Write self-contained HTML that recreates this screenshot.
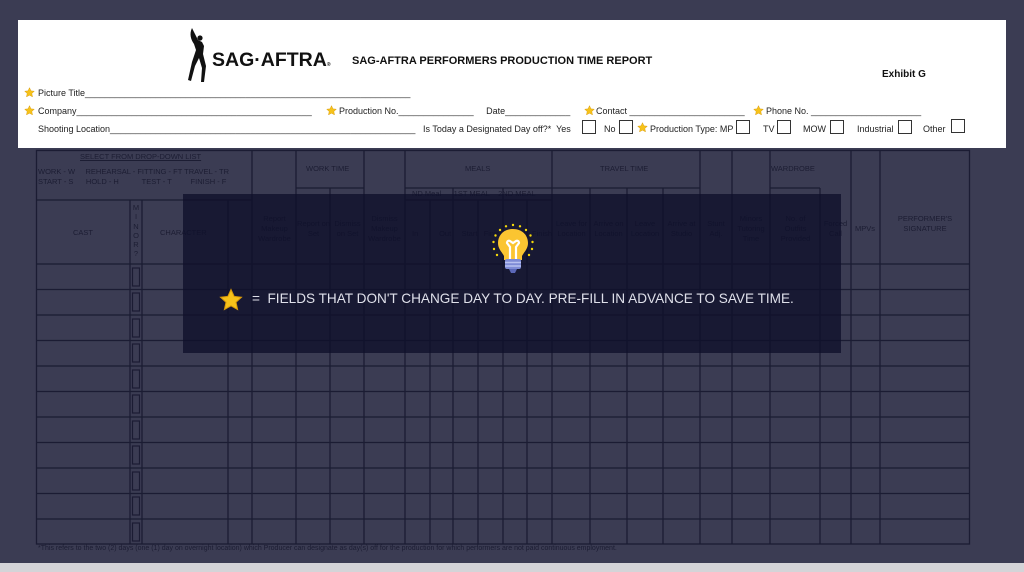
<!DOCTYPE html>
<html><head><meta charset="utf-8">
<style>
*{margin:0;padding:0;box-sizing:border-box}
body{width:1024px;height:572px;background:#3b3c53;position:relative;overflow:hidden;font-family:"Liberation Sans",Arial,sans-serif}
.a{position:absolute;white-space:nowrap}
.hdr{position:absolute;left:18px;top:20px;width:988px;height:128px;background:#fff}
.f{font-size:9px;color:#222}
.t{font-size:7.5px;color:#1c1d33;text-align:center;line-height:10px}
.w{white-space:normal}
.cb{position:absolute;width:14px;height:14px;border:1px solid #333;background:#fff}
</style></head><body>
<div class="hdr"></div>
<svg class="a" style="left:186px;top:26px" width="26" height="58" viewBox="0 0 26 58"><path d="M6 2 C3 8 5 14 8 18 L10 24 L6 36 L2 54 L5 55 L9 40 L13 32 L16 42 L15 56 L18 56 L20 40 L17 28 L18 20 L16 16 L12 14 L9 8 Z" fill="#111"/><circle cx="14" cy="12" r="2.6" fill="#111"/></svg>
<div class="a" style="left:212px;top:49px;font-size:19.5px;font-weight:bold;color:#111">SAG·AFTRA<span style="font-size:5px">®</span></div>
<div class="a" style="left:352px;top:55px;font-size:11px;font-weight:bold;color:#111">SAG-AFTRA PERFORMERS PRODUCTION TIME REPORT</div>
<div class="a" style="left:882px;top:69px;font-size:10px;font-weight:bold;color:#111">Exhibit G</div>
<svg width="0" height="0" style="position:absolute"><defs><symbol id="st" viewBox="0 0 24 24"><path d="M12 1.5l3.2 6.9 7.3.8-5.5 5 1.6 7.3L12 17.8 5.4 21.5 7 14.2 1.5 9.2l7.3-.8z" fill="#f6c21a" stroke="#d99a0a" stroke-width="1"/></symbol></defs></svg>
<svg class="a" style="left:24px;top:87px" width="11" height="11"><use href="#st"/></svg>
<div class="a f" style="left:38px;top:88px">Picture Title_________________________________________________________________</div>
<svg class="a" style="left:24px;top:105px" width="11" height="11"><use href="#st"/></svg>
<div class="a f" style="left:38px;top:106px">Company_______________________________________________</div>
<svg class="a" style="left:326px;top:105px" width="11" height="11"><use href="#st"/></svg>
<div class="a f" style="left:339px;top:106px">Production No._______________&nbsp;&nbsp;&nbsp;&nbsp; Date_____________</div>
<svg class="a" style="left:584px;top:105px" width="11" height="11"><use href="#st"/></svg>
<div class="a f" style="left:596px;top:106px">Contact _______________________</div>
<svg class="a" style="left:753px;top:105px" width="11" height="11"><use href="#st"/></svg>
<div class="a f" style="left:766px;top:106px">Phone No. ______________________</div>
<div class="a f" style="left:38px;top:124px">Shooting Location_____________________________________________________________</div>
<div class="a f" style="left:423px;top:124px">Is Today a Designated Day off?*&nbsp; Yes</div>
<div class="cb" style="left:582px;top:120px"></div>
<div class="a f" style="left:604px;top:124px">No</div>
<div class="cb" style="left:619px;top:120px"></div>
<svg class="a" style="left:637px;top:122px" width="11" height="11"><use href="#st"/></svg>
<div class="a f" style="left:650px;top:124px">Production Type: MP</div>
<div class="cb" style="left:736px;top:120px"></div>
<div class="a f" style="left:763px;top:124px">TV</div>
<div class="cb" style="left:777px;top:120px"></div>
<div class="a f" style="left:803px;top:124px">MOW</div>
<div class="cb" style="left:830px;top:120px"></div>
<div class="a f" style="left:857px;top:124px">Industrial</div>
<div class="cb" style="left:898px;top:120px"></div>
<div class="a f" style="left:923px;top:124px">Other</div>
<div class="cb" style="left:951px;top:119px"></div>

<svg class="a" style="left:0;top:0" width="1024" height="572">
<g stroke="#1b1c33" stroke-width="1.3" fill="none">
<rect x="36.5" y="150.5" width="933" height="393.5"/>
<path d="M252 150V544M296 150V544M364 150V544M405 150V544M552 150V544M700 150V544M732 150V544M770 150V544M851 150V544M880 150V544"/>
<path d="M130 200V544M142 200V544M228 200V544M330 188V544M430 200V544M453 188V544M478 200V544M503 188V544M527 200V544M590 188V544M627 188V544M663 188V544M820 188V544"/>
<path d="M296 188H364M405 188H700M770 188H820M36 200H252M405 200H552"/>
<path d="M36 264H970M36 289.5H970M36 315H970M36 340.5H970M36 366H970M36 391.5H970M36 417H970M36 442.5H970M36 468H970M36 493.5H970M36 519H970"/>
<g stroke-width="1.2">
<rect x="132.5" y="268" width="7" height="18"/><rect x="132.5" y="293" width="7" height="18"/><rect x="132.5" y="319" width="7" height="18"/><rect x="132.5" y="344" width="7" height="18"/><rect x="132.5" y="370" width="7" height="18"/><rect x="132.5" y="395" width="7" height="18"/><rect x="132.5" y="421" width="7" height="18"/><rect x="132.5" y="446" width="7" height="18"/><rect x="132.5" y="472" width="7" height="18"/><rect x="132.5" y="497" width="7" height="18"/><rect x="132.5" y="523" width="7" height="18"/>
</g></g></svg>

<div class="a t" style="left:80px;top:152px;text-decoration:underline">SELECT FROM DROP-DOWN LIST</div>
<div class="a t" style="left:38px;top:167px;text-align:left">WORK - W&nbsp;&nbsp;&nbsp;&nbsp; REHEARSAL - FITTING - FT TRAVEL - TR<br>START - S&nbsp;&nbsp;&nbsp;&nbsp;&nbsp; HOLD - H&nbsp;&nbsp;&nbsp;&nbsp;&nbsp;&nbsp;&nbsp;&nbsp;&nbsp;&nbsp; TEST - T&nbsp;&nbsp;&nbsp;&nbsp;&nbsp;&nbsp;&nbsp;&nbsp; FINISH - F</div>
<div class="a t" style="left:73px;top:228px">CAST</div>
<div class="a t w" style="left:131px;top:203px;width:10px;line-height:9.3px">M<br>I<br>N<br>O<br>R<br>?</div>
<div class="a t" style="left:160px;top:228px">CHARACTER</div>
<div class="a t" style="left:306px;top:164px">WORK TIME</div>
<div class="a t" style="left:465px;top:164px">MEALS</div>
<div class="a t" style="left:600px;top:164px">TRAVEL TIME</div>
<div class="a t" style="left:771px;top:164px">WARDROBE</div>
<div class="a t w" style="left:253px;top:214px;width:43px">Report Makeup Wardrobe</div>
<div class="a t w" style="left:297px;top:219px;width:33px">Report on Set</div>
<div class="a t w" style="left:331px;top:219px;width:33px">Dismiss on Set</div>
<div class="a t w" style="left:364px;top:214px;width:41px">Dismiss Makeup Wardrobe</div>
<div class="a t" style="left:412px;top:189px">ND Meal&nbsp;&nbsp;&nbsp;&nbsp;&nbsp; 1ST MEAL&nbsp;&nbsp;&nbsp; 2ND MEAL</div>
<div class="a t" style="left:412px;top:229px">In&nbsp;&nbsp;&nbsp;&nbsp;&nbsp;&nbsp;&nbsp;&nbsp;&nbsp; Out&nbsp;&nbsp;&nbsp;&nbsp; Start&nbsp;&nbsp; Finish&nbsp;&nbsp; Start&nbsp;&nbsp; Finish</div>
<div class="a t w" style="left:553px;top:219px;width:37px">Leave for Location</div>
<div class="a t w" style="left:590px;top:219px;width:37px">Arrive on Location</div>
<div class="a t w" style="left:627px;top:219px;width:36px">Leave Location</div>
<div class="a t w" style="left:663px;top:219px;width:37px">Arrive at Studio</div>
<div class="a t w" style="left:700px;top:219px;width:32px">Stunt Adj.</div>
<div class="a t w" style="left:732px;top:214px;width:38px">Minors Tutoring Time</div>
<div class="a t w" style="left:780px;top:214px;width:31px">No. of Outfits Provided</div>
<div class="a t w" style="left:820px;top:219px;width:31px">Forced Call</div>
<div class="a t" style="left:855px;top:224px">MPVs</div>
<div class="a t w" style="left:890px;top:214px;width:70px">PERFORMER'S SIGNATURE</div>
<div class="a" style="left:38px;top:545px;font-size:7px;color:#1c1d33">*This refers to the two (2) days (one (1) day on overnight location) which Producer can designate as day(s) off for the production for which performers are not paid continuous employment.</div>
<div class="a" style="left:0;top:563px;width:1024px;height:9px;background:#d4d4d8"></div>

<div class="a" style="left:183px;top:194px;width:658px;height:159px;background:rgba(14,15,42,0.78)"></div>
<svg class="a" style="left:491px;top:223px" width="44" height="52" viewBox="0 0 44 52">
<g fill="#f5d90a"><circle cx="22" cy="2" r="1.2"/><circle cx="29" cy="3.3" r="1.2"/><circle cx="35" cy="7" r="1.2"/><circle cx="39.5" cy="12.5" r="1.2"/><circle cx="41.5" cy="19" r="1.2"/><circle cx="41" cy="26" r="1.2"/><circle cx="38" cy="32" r="1.2"/><circle cx="15" cy="3.3" r="1.2"/><circle cx="9" cy="7" r="1.2"/><circle cx="4.5" cy="12.5" r="1.2"/><circle cx="2.5" cy="19" r="1.2"/><circle cx="3" cy="26" r="1.2"/><circle cx="6" cy="32" r="1.2"/></g>
<path d="M22 6C13 6 7 12 7 20c0 6 4 9 6 13v4h18v-4c2-4 6-7 6-13 0-8-6-14-15-14z" fill="#fbc531"/>
<path d="M19 36V24l-3-4a2 2 0 0 1 3-2l3 2 3-2a2 2 0 0 1 3 2l-3 4v12" fill="none" stroke="#fff" stroke-width="2.2"/>
<rect x="14" y="36" width="16" height="10" rx="2" fill="#7e8bd6"/><path d="M14 39.5h16M14 43h16" stroke="#b9c1f0" stroke-width="1.4"/>
<path d="M18 46h8l-2 4h-4z" fill="#5c68b8"/></svg>
<svg class="a" style="left:219px;top:288px" width="24" height="24"><use href="#st"/></svg>
<div class="a" style="left:252px;top:291px;font-size:13.6px;color:#dfe0ea">=&nbsp; FIELDS THAT DON'T CHANGE DAY TO DAY. PRE-FILL IN ADVANCE TO SAVE TIME.</div>
</body></html>
